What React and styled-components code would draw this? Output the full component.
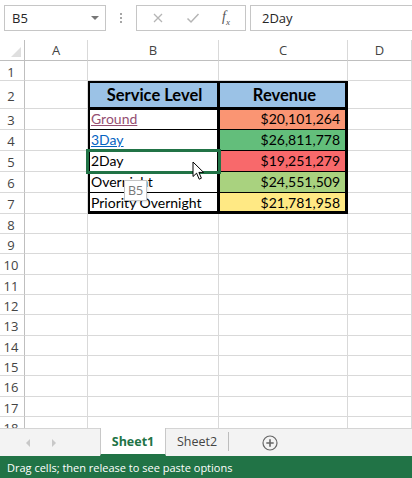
import React from "react";
import styled, { createGlobalStyle } from "styled-components";

const GREEN = "#217346";
const GRID = "#d9d9d9";

const Global = createGlobalStyle`
  html, body {
    margin: 0;
    padding: 0;
    background: #fff;
  }
  body {
    width: 412px;
    height: 478px;
    overflow: hidden;
    font-family: "Open Sans", "Noto Sans", sans-serif;
  }
`;

const Window = styled.div`
  width: 412px;
  height: 478px;
  display: flex;
  flex-direction: column;
  overflow: hidden;
  background: #fff;
`;

/* ---------- formula bar ---------- */

const FormulaBar = styled.div`
  height: 40px;
  display: flex;
  align-items: flex-start;
  padding: 5px 0 0 4px;
  box-sizing: border-box;
`;

const NameBox = styled.div`
  width: 102px;
  height: 26px;
  box-sizing: border-box;
  border: 1px solid #c6c6c6;
  display: flex;
  align-items: center;
  justify-content: space-between;
  padding: 0 6px 0 7px;
  font-size: 13px;
  color: #262626;
`;

const DropArrow = styled.span`
  width: 0;
  height: 0;
  border-left: 4px solid transparent;
  border-right: 4px solid transparent;
  border-top: 4px solid #777;
`;

const Dots = styled.div`
  width: 30px;
  height: 26px;
  display: flex;
  flex-direction: column;
  align-items: center;
  justify-content: center;
  gap: 2px;
  span {
    width: 2px;
    height: 2px;
    background: #a6a6a6;
  }
`;

const FxGroup = styled.div`
  width: 110px;
  height: 26px;
  box-sizing: border-box;
  border: 1px solid #c6c6c6;
  display: flex;
  align-items: center;
  justify-content: space-around;
  padding: 0 4px;
`;

const FxLabel = styled.span`
  font-family: "Liberation Serif", serif;
  font-style: italic;
  font-size: 14px;
  color: #555;
  sub {
    font-size: 9px;
  }
`;

const FormulaInput = styled.div`
  flex: 1;
  height: 26px;
  margin-left: 4px;
  box-sizing: border-box;
  border: 1px solid #c6c6c6;
  border-right: none;
  display: flex;
  align-items: center;
  padding-left: 11px;
  font-size: 13px;
  color: #262626;
`;

/* ---------- sheet ---------- */

const Sheet = styled.div`
  position: relative;
  flex: 1;
  overflow: hidden;
  display: grid;
  grid-template-columns: 25px 63px 131px 129px 64px;
  grid-auto-rows: ${(p) => p.$rows};
`;

const Corner = styled.div`
  border-right: 1px solid #bfbfbf;
  border-bottom: 1px solid #bfbfbf;
  position: relative;
  &::after {
    content: "";
    position: absolute;
    right: 3px;
    bottom: 3px;
    width: 0;
    height: 0;
    border-left: 10px solid transparent;
    border-bottom: 10px solid #dfdfdf;
  }
`;

const ColHead = styled.div`
  border-right: 1px solid ${GRID};
  border-bottom: 1px solid #bfbfbf;
  display: flex;
  align-items: center;
  justify-content: center;
  font-size: 13px;
  color: #444;
`;

const RowHead = styled.div`
  border-right: 1px solid #bfbfbf;
  border-bottom: 1px solid ${GRID};
  display: flex;
  align-items: center;
  justify-content: center;
  font-size: 13px;
  color: #444;
  padding: 2px 2px 0 0;
  box-sizing: border-box;
`;

const Cell = styled.div`
  position: relative;
  box-sizing: border-box;
  border-right: 1px solid ${(p) => (p.$frame ? "#000" : GRID)};
  border-bottom: 1px solid ${(p) => (p.$frame ? "#000" : GRID)};
  background: ${(p) => p.$bg || "transparent"};
  box-shadow: ${(p) => p.$shadow || "none"};
  display: flex;
  align-items: ${(p) => (p.$head ? "center" : "flex-end")};
  justify-content: ${(p) =>
    p.$align === "right" ? "flex-end" : p.$align === "center" ? "center" : "flex-start"};
  padding: ${(p) => (p.$align === "right" ? "0 7px 0 0" : "0 0 0 3px")};
  font-family: "Lato", "Open Sans", sans-serif;
  font-size: ${(p) => (p.$head ? "16.5px" : "14px")};
  font-weight: ${(p) => (p.$head ? 700 : 400)};
  color: ${(p) => p.$color || "#000"};
  text-decoration: ${(p) => (p.$link ? "underline" : "none")};
  white-space: nowrap;
  line-height: 20px;
  z-index: ${(p) => (p.$selected ? 2 : "auto")};

  ${(p) =>
    p.$selected &&
    `
    &::after {
      content: "";
      position: absolute;
      inset: -2px -3px -3px -2px;
      border: 3px solid ${GREEN};
      pointer-events: none;
    }
  `}
`;

const Tip = styled.div`
  position: absolute;
  left: 124px;
  top: 140px;
  height: 19px;
  padding: 0 3px;
  background: #fff;
  border: 1px solid #c4c4c4;
  box-shadow: 1px 1px 2px rgba(0, 0, 0, 0.12);
  font-size: 12.5px;
  line-height: 19px;
  color: #777;
  z-index: 4;
`;

const Pointer = styled.svg`
  position: absolute;
  left: 192px;
  top: 121px;
  z-index: 5;
`;

/* ---------- tabs & status ---------- */

const TabBar = styled.div`
  height: 28px;
  flex-shrink: 0;
  border-top: 1px solid #d4d4d4;
  background: #f3f3f3;
  display: flex;
  align-items: stretch;
  box-sizing: border-box;
`;

const Nav = styled.div`
  width: 100px;
  display: flex;
  align-items: center;
  gap: 22px;
  padding-left: 26px;
  box-sizing: border-box;
`;

const NavArrow = styled.span`
  width: 0;
  height: 0;
  border-top: 4px solid transparent;
  border-bottom: 4px solid transparent;
  ${(p) =>
    p.$dir === "left"
      ? "border-right: 4px solid #c8c8c8;"
      : "border-left: 4px solid #c8c8c8;"}
`;

const Tab = styled.div`
  width: ${(p) => (p.$active ? "66px" : "62px")};
  margin-top: -1px;
  box-sizing: border-box;
  display: flex;
  align-items: center;
  justify-content: center;
  font-size: 12.5px;
  font-weight: ${(p) => (p.$active ? 700 : 400)};
  color: ${(p) => (p.$active ? GREEN : "#444")};
  background: ${(p) => (p.$active ? "#fff" : "transparent")};
  border-left: ${(p) => (p.$active ? "1px solid #c8c8c8" : "none")};
  border-right: ${(p) => (p.$active ? "1px solid #c8c8c8" : "none")};
  border-bottom: 2px solid ${(p) => (p.$active ? GREEN : "transparent")};
  padding-top: 1px;
`;

const TabSep = styled.div`
  width: 1px;
  background: #bdbdbd;
  margin: 3px 0 5px;
`;

const AddSheet = styled.div`
  margin-left: 33px;
  display: flex;
  align-items: center;
`;

const StatusBar = styled.div`
  height: 22px;
  flex-shrink: 0;
  background: ${GREEN};
  color: #fff;
  font-size: 11px;
  display: flex;
  align-items: center;
  padding-left: 7px;
`;

const rowHeights = [20, 28, 21, 21, 21, 21, 21, 20, 20, 21, 20, 20, 21, 20, 20, 21, 20, 20];

const data = {
  2: [
    { text: "Service Level", head: true },
    { text: "Revenue", head: true },
  ],
  3: [
    { text: "Ground", color: "#954f72", link: true },
    { text: "$20,101,264", bg: "#fa9573" },
  ],
  4: [
    { text: "3Day", color: "#0563c1", link: true },
    { text: "$26,811,778", bg: "#63be7b" },
  ],
  5: [{ text: "2Day", selected: true }, { text: "$19,251,279", bg: "#f8696b" }],
  6: [{ text: "Overnight" }, { text: "$24,551,509", bg: "#a9d27f" }],
  7: [{ text: "Priority Overnight" }, { text: "$21,781,958", bg: "#ffe984" }],
};

function frameShadow(row, col) {
  const s = [];
  if (col === "B") s.push("inset 2px 0 0 #000", "inset -1px 0 0 #000");
  if (col === "C") s.push("inset 1px 0 0 #000", "inset -2px 0 0 #000");
  if (row === 2) s.push("inset 0 2px 0 #000", "inset 0 -1px 0 #000");
  if (row === 3) s.push("inset 0 1px 0 #000");
  if (row === 7) s.push("inset 0 -2px 0 #000");
  return s.join(", ");
}

export default function App() {
  const rows = ["21px", ...rowHeights.map((h) => h + "px")].join(" ");

  return (
    <Window>
      <Global />
      <FormulaBar>
        <NameBox>
          B5
          <DropArrow />
        </NameBox>
        <Dots>
          <span />
          <span />
          <span />
        </Dots>
        <FxGroup>
          <svg width="12" height="12" viewBox="0 0 12 12">
            <path d="M2 2 L10 10 M10 2 L2 10" stroke="#b5b5b5" strokeWidth="1.3" />
          </svg>
          <svg width="14" height="12" viewBox="0 0 14 12">
            <path d="M1.5 6.5 L5 10 L12.5 2" stroke="#b5b5b5" strokeWidth="1.5" fill="none" />
          </svg>
          <FxLabel>
            f<sub>x</sub>
          </FxLabel>
        </FxGroup>
        <FormulaInput>2Day</FormulaInput>
      </FormulaBar>

      <Sheet $rows={rows}>
        <Corner />
        {["A", "B", "C", "D"].map((c) => (
          <ColHead key={c}>{c}</ColHead>
        ))}
        {rowHeights.map((_, i) => {
          const r = i + 1;
          const d = data[r];
          return (
            <React.Fragment key={r}>
              <RowHead>{r}</RowHead>
              <Cell />
              {d ? (
                <>
                  <Cell
                    $frame
                    $head={d[0].head}
                    $align={d[0].head ? "center" : "left"}
                    $bg={d[0].head ? "#9bc2e6" : "#fff"}
                    $color={d[0].color}
                    $link={d[0].link}
                    $selected={d[0].selected}
                    $shadow={frameShadow(r, "B")}
                  >
                    {d[0].text}
                  </Cell>
                  <Cell
                    $frame
                    $head={d[1].head}
                    $align={d[1].head ? "center" : "right"}
                    $bg={d[1].head ? "#9bc2e6" : d[1].bg}
                    $shadow={frameShadow(r, "C")}
                  >
                    {d[1].text}
                  </Cell>
                </>
              ) : (
                <>
                  <Cell />
                  <Cell />
                </>
              )}
              <Cell />
            </React.Fragment>
          );
        })}
        <Tip>B5</Tip>
        <Pointer width="13" height="20" viewBox="0 0 13 20">
          <path
            d="M1 1 L1 15.5 L4.6 12.2 L7.2 18.2 L9.4 17.2 L6.9 11.4 L11.6 11.4 Z"
            fill="#fff"
            stroke="#000"
            strokeWidth="1"
            strokeLinejoin="round"
          />
        </Pointer>
      </Sheet>

      <TabBar>
        <Nav>
          <NavArrow $dir="left" />
          <NavArrow $dir="right" />
        </Nav>
        <Tab $active>Sheet1</Tab>
        <Tab>Sheet2</Tab>
        <TabSep />
        <AddSheet>
          <svg width="16" height="16" viewBox="0 0 16 16">
            <circle cx="8" cy="8" r="7" fill="none" stroke="#666" strokeWidth="1.2" />
            <path d="M8 4.3 V11.7 M4.3 8 H11.7" stroke="#666" strokeWidth="1.6" />
          </svg>
        </AddSheet>
      </TabBar>
      <StatusBar>Drag cells; then release to see paste options</StatusBar>
    </Window>
  );
}
